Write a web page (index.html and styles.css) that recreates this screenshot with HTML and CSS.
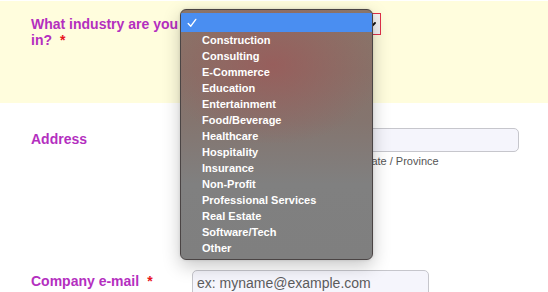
FILE: index.html
```html
<!DOCTYPE html>
<html>
<head>
<meta charset="utf-8">
<link rel="stylesheet" href="styles.css">
</head>
<body>
<div class="page">
  <div class="row row-active">
    <label class="label">What industry are you in?<span class="req">*</span></label>
    <div class="field">
      <div class="select">
        <svg class="chev" width="8" height="8" viewBox="0 0 8 8"><path d="M1 6 L4 3" stroke="#111" stroke-width="1.8" stroke-linecap="round"/></svg>
      </div>
    </div>
  </div>
  <div class="row row-address">
    <label class="label">Address</label>
    <div class="field two">
      <div class="sub">
        <div class="input"></div>
        <div class="sublabel">City</div>
      </div>
      <div class="sub">
        <div class="input"></div>
        <div class="sublabel">State / Province</div>
      </div>
    </div>
  </div>
  <div class="row row-email">
    <label class="label">Company e-mail<span class="req">*</span></label>
    <div class="field">
      <div class="input email">ex: myname@example.com</div>
    </div>
  </div>

  <div class="menu">
    <div class="opt sel">
      <svg class="check" width="10" height="10" viewBox="0 0 10 10"><path d="M1.2 5.4 L3.8 8.2 L8.8 1.4" fill="none" stroke="#fff" stroke-width="1.4" stroke-linecap="round" stroke-linejoin="round"/></svg>
    </div>
    <div class="opt">Construction</div>
    <div class="opt">Consulting</div>
    <div class="opt">E-Commerce</div>
    <div class="opt">Education</div>
    <div class="opt">Entertainment</div>
    <div class="opt">Food/Beverage</div>
    <div class="opt">Healthcare</div>
    <div class="opt">Hospitality</div>
    <div class="opt">Insurance</div>
    <div class="opt">Non-Profit</div>
    <div class="opt">Professional Services</div>
    <div class="opt">Real Estate</div>
    <div class="opt">Software/Tech</div>
    <div class="opt">Other</div>
  </div>
</div>
</body>
</html>
```

FILE: styles.css
```css
html, body {
  margin: 0;
  padding: 0;
  background: #ffffff;
  font-family: "Liberation Sans", Arial, sans-serif;
  overflow: hidden;
}

.page {
  position: relative;
  padding-top: 1px;
  width: 548px;
  height: 291px;
  overflow: hidden;
}

.row {
  display: grid;
  grid-template-columns: 161px 1fr;
  padding-left: 31px;
}

.row-active {
  background: #fffddd;
  height: 102px;
  box-sizing: border-box;
  padding-top: 12px;
}

.row-address {
  padding-top: 25px;
  padding-bottom: 102px;
}

.label {
  display: block;
  padding-top: 3px;
  font-size: 14px;
  line-height: 16px;
  font-weight: bold;
  color: #b42fbf;
}

.req {
  color: #e8141c;
  margin-left: 8px;
}

.select {
  width: 189px;
  height: 22px;
  box-sizing: border-box;
  border: 1px solid #e0304a;
  background: #f3f3f3;
  position: relative;
  display: flex;
  align-items: center;
  justify-content: flex-end;
  padding-right: 1px;
}

.chev {
  display: block;
}

.two {
  display: flex;
  gap: 8px;
}

.sub {
  display: flex;
  flex-direction: column;
}

.sub:first-child .input {
  width: 161px;
}

.sub:last-child .input {
  width: 158px;
}

.input {
  height: 24px;
  box-sizing: border-box;
  border: 1px solid #c6c6cc;
  border-radius: 5px;
  background: #f5f5fc;
}

.sublabel {
  margin-top: 2px;
  font-size: 11px;
  line-height: 14px;
  color: #555555;
}

.email {
  width: 237px;
  height: 28px;
  font-size: 14px;
  line-height: 24px;
  padding-left: 4px;
  color: #5c5c5c;
}

.menu {
  position: absolute;
  left: 180px;
  top: 9px;
  width: 193px;
  height: 251px;
  box-sizing: border-box;
  border: 1px solid #4a4444;
  border-radius: 6px;
  padding: 3px 0;
  background:
    radial-gradient(ellipse 110px 80px at 48% 22%, rgba(156, 88, 88, 0.75), rgba(156, 88, 88, 0) 100%),
    linear-gradient(to bottom, #8a7569 0%, #877269 25%, #84756f 45%, #808080 70%, #7f7f7f 100%);
  box-shadow: 0 6px 18px rgba(0, 0, 0, 0.22), 0 0 3px rgba(0, 0, 0, 0.12);
  overflow: hidden;
}

.opt {
  height: 16px;
  line-height: 16px;
  padding-left: 21px;
  font-size: 11px;
  font-weight: bold;
  color: #ffffff;
  white-space: nowrap;
}

.opt.sel {
  height: 19px;
  background: #4a8ef1;
  padding-left: 6px;
  display: flex;
  align-items: center;
}

.check {
  display: block;
}
```
